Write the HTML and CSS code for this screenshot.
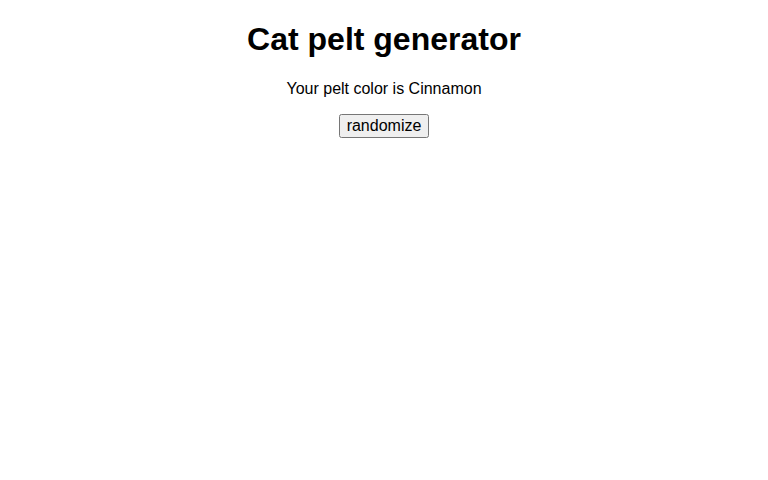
FILE: index.html
```html
<!DOCTYPE html>
<html lang="en">
<head>
    <meta charset="UTF-8">
    <meta name="viewport" content="width=device-width, initial-scale=1.0">
    <title>Cat pelt generator</title>
    <link rel="stylesheet" href="styles.css">
</head>
<body>
    <div class="app">
        <h1>Cat pelt generator</h1>
        <p class="result">Your pelt color is <span id="pelt">Cinnamon</span></p>
        <button class="randomize" id="randomize">randomize</button>
    </div>
</body>
</html>
```

FILE: styles.css
```css
body {
    margin: 0;
    padding: 0 8px 8px;
    font-family: 'Liberation Sans', Arial, sans-serif;
    color: #000;
    background: #fff;
}

.app {
    text-align: center;
}

.app h1 {
    font-size: 2em;
    margin: 0.67em 0;
}

.result {
    margin: 1em 0;
}

/* keep the native button look, just bigger text */
.randomize {
    font-family: 'Liberation Sans', Arial, sans-serif;
    font-size: 16px;
}
```
